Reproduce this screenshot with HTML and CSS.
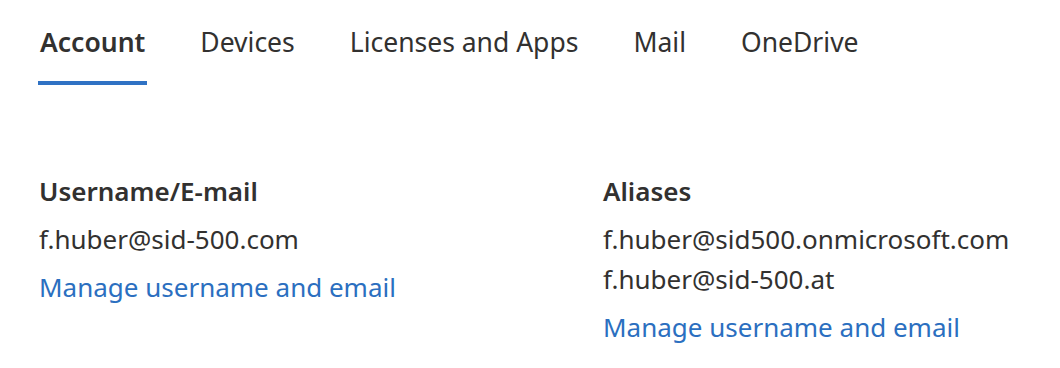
FILE: index.html
```html
<!DOCTYPE html>
<html>
<head>
  <title>Account</title>
  <link rel="stylesheet" href="styles.css">
</head>
<body>
  <nav class="tabs">
    <a class="tab active">Account</a>
    <a class="tab">Devices</a>
    <a class="tab">Licenses and Apps</a>
    <a class="tab">Mail</a>
    <a class="tab">OneDrive</a>
  </nav>
  <main class="details">
    <section class="field">
      <h2>Username/E-mail</h2>
      <p>f.huber@sid-500.com</p>
      <a class="link">Manage username and email</a>
    </section>
    <section class="field">
      <h2>Aliases</h2>
      <p>f.huber@sid500.onmicrosoft.com</p>
      <p>f.huber@sid-500.at</p>
      <a class="link">Manage username and email</a>
    </section>
  </main>
</body>
</html>
```

FILE: styles.css
```css
body {
  font-family: "Noto Sans", "Open Sans", sans-serif;
  color: #323130;
  background: #fff;
  margin: 0;
  padding: 0;
}
.tabs {
  display: flex;
  gap: 51px;
  padding: 22px 0 0 38px;
}
.tab {
  font-size: 26.5px;
  line-height: 40px;
  padding: 0 2px;
  border-bottom: 4px solid transparent;
  padding-bottom: 19px;
}
.tab.active {
  font-weight: 600;
  border-bottom-color: #2f72c4;
}
.details {
  display: grid;
  grid-template-columns: 564px 1fr;
  padding: 86px 0 0 39px;
}
.field h2 {
  font-size: 26px;
  font-weight: 600;
  line-height: 40px;
  margin: 0 0 8px;
}
.field p {
  font-size: 26px;
  line-height: 40px;
  margin: 0;
}
.link {
  display: block;
  font-size: 26px;
  line-height: 40px;
  margin-top: 8px;
  color: #2b6fc0;
}
```
